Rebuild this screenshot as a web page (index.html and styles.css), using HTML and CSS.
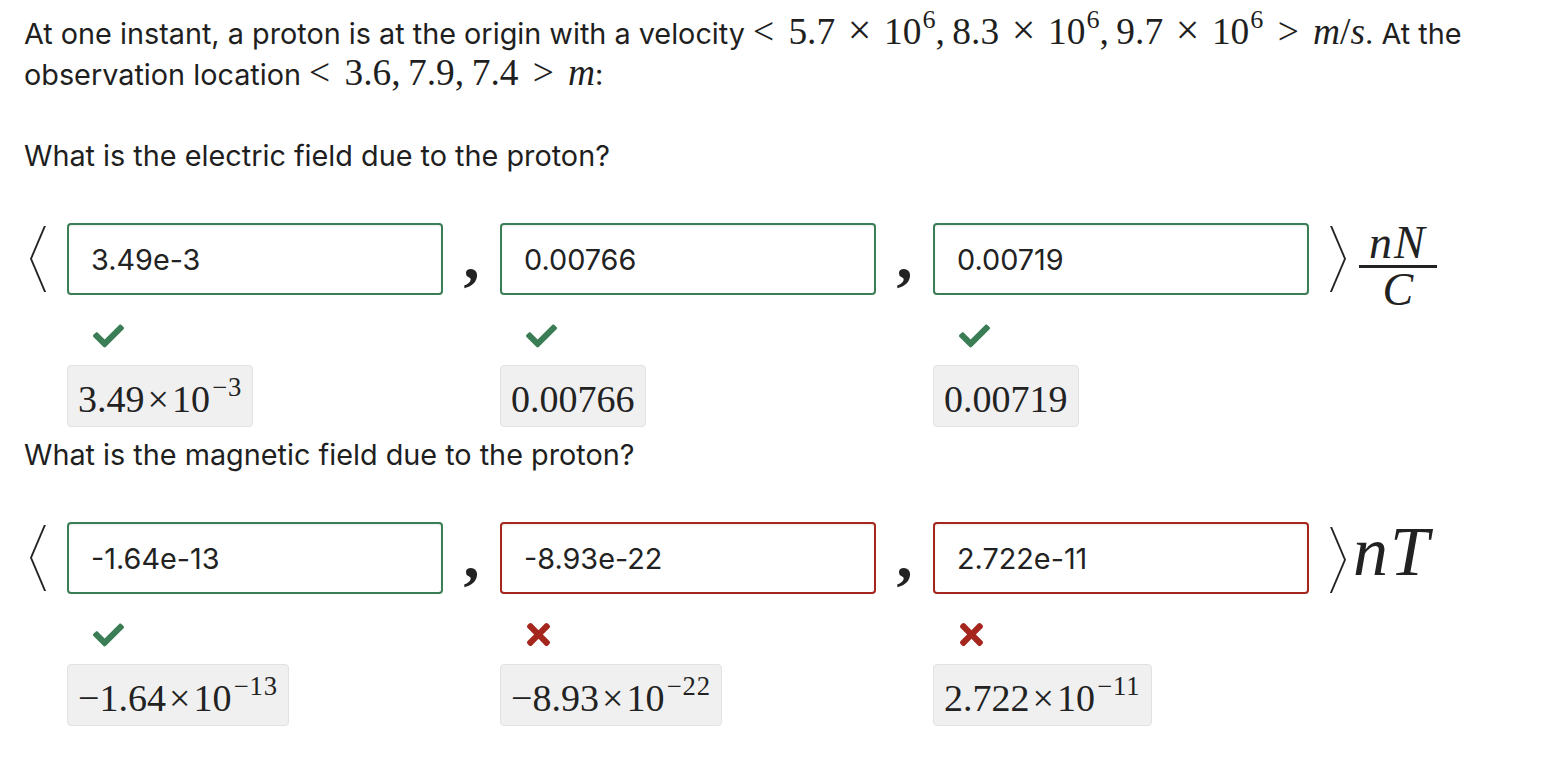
FILE: index.html
```html
<!DOCTYPE html>
<html lang="en">
<head>
  <meta charset="UTF-8">
  <meta name="viewport" content="width=device-width, initial-scale=1.0">
  <title>Proton Fields</title>
  <link rel="stylesheet" href="styles.css">
</head>
<body>
  <div class="problem">
    <p class="intro">
      At one instant, a proton is at the origin with a velocity
      <span class="math"><span class="rel">&lt;</span>5.7<span class="bin">×</span>10<sup>6</sup><span class="punct">,</span>8.3<span class="bin">×</span>10<sup>6</sup><span class="punct">,</span>9.7<span class="bin">×</span>10<sup>6</sup><span class="rel">&gt;</span><i>m</i>/<i>s</i></span>. At the
      observation location
      <span class="math"><span class="rel">&lt;</span>3.6<span class="punct">,</span>7.9<span class="punct">,</span>7.4<span class="rel">&gt;</span><i>m</i></span>:
    </p>

    <!-- electric field -->
    <p class="prompt">What is the electric field due to the proton?</p>
    <div class="answer-row">
      <span class="delim open"><span></span><span></span></span>
      <div class="cell">
        <input class="field good" type="text" value="3.49e-3">
        <span class="mark good">
          <svg viewBox="0 60 512 392" width="31" height="24"><path d="M173.898 439.404l-166.4-166.4c-9.997-9.997-9.997-26.206 0-36.204l36.203-36.204c9.997-9.998 26.207-9.998 36.204 0L192 312.69 432.095 72.596c9.997-9.997 26.207-9.997 36.204 0l36.203 36.204c9.997 9.997 9.997 26.206 0 36.204l-294.4 294.401c-9.998 9.997-26.207 9.997-36.204-.001z"/></svg>
        </span>
        <div class="preview"><span class="math">3.49<span class="bin">×</span>10<sup>−3</sup></span></div>
      </div>
      <span class="sep">,</span>
      <div class="cell">
        <input class="field good" type="text" value="0.00766">
        <span class="mark good">
          <svg viewBox="0 60 512 392" width="31" height="24"><path d="M173.898 439.404l-166.4-166.4c-9.997-9.997-9.997-26.206 0-36.204l36.203-36.204c9.997-9.998 26.207-9.998 36.204 0L192 312.69 432.095 72.596c9.997-9.997 26.207-9.997 36.204 0l36.203 36.204c9.997 9.997 9.997 26.206 0 36.204l-294.4 294.401c-9.998 9.997-26.207 9.997-36.204-.001z"/></svg>
        </span>
        <div class="preview"><span class="math">0.00766</span></div>
      </div>
      <span class="sep">,</span>
      <div class="cell">
        <input class="field good" type="text" value="0.00719">
        <span class="mark good">
          <svg viewBox="0 60 512 392" width="31" height="24"><path d="M173.898 439.404l-166.4-166.4c-9.997-9.997-9.997-26.206 0-36.204l36.203-36.204c9.997-9.998 26.207-9.998 36.204 0L192 312.69 432.095 72.596c9.997-9.997 26.207-9.997 36.204 0l36.203 36.204c9.997 9.997 9.997 26.206 0 36.204l-294.4 294.401c-9.998 9.997-26.207 9.997-36.204-.001z"/></svg>
        </span>
        <div class="preview"><span class="math">0.00719</span></div>
      </div>
      <span class="delim close"><span></span><span></span></span>
      <span class="unit frac">
        <span class="num"><i>nN</i></span>
        <span class="den"><i>C</i></span>
      </span>
    </div>

    <!-- magnetic field -->
    <p class="prompt second">What is the magnetic field due to the proton?</p>
    <div class="answer-row">
      <span class="delim open"><span></span><span></span></span>
      <div class="cell">
        <input class="field good" type="text" value="-1.64e-13">
        <span class="mark good">
          <svg viewBox="0 60 512 392" width="31" height="24"><path d="M173.898 439.404l-166.4-166.4c-9.997-9.997-9.997-26.206 0-36.204l36.203-36.204c9.997-9.998 26.207-9.998 36.204 0L192 312.69 432.095 72.596c9.997-9.997 26.207-9.997 36.204 0l36.203 36.204c9.997 9.997 9.997 26.206 0 36.204l-294.4 294.401c-9.998 9.997-26.207 9.997-36.204-.001z"/></svg>
        </span>
        <div class="preview"><span class="math">−1.64<span class="bin">×</span>10<sup>−13</sup></span></div>
      </div>
      <span class="sep">,</span>
      <div class="cell">
        <input class="field bad" type="text" value="-8.93e-22">
        <span class="mark bad">
          <svg viewBox="0 80 352 352" width="23" height="23"><path d="M242.72 256l100.07-100.07c12.28-12.28 12.28-32.19 0-44.48l-22.24-22.24c-12.28-12.28-32.19-12.28-44.48 0L176 189.28 75.93 89.21c-12.28-12.28-32.19-12.28-44.48 0L9.21 111.45c-12.28 12.28-12.28 32.19 0 44.48L109.28 256 9.21 356.07c-12.28 12.28-12.28 32.19 0 44.48l22.24 22.24c12.28 12.28 32.2 12.28 44.48 0L176 322.72l100.07 100.07c12.28 12.28 32.2 12.28 44.48 0l22.24-22.24c12.28-12.28 12.28-32.19 0-44.48L242.72 256z"/></svg>
        </span>
        <div class="preview"><span class="math">−8.93<span class="bin">×</span>10<sup>−22</sup></span></div>
      </div>
      <span class="sep">,</span>
      <div class="cell">
        <input class="field bad" type="text" value="2.722e-11">
        <span class="mark bad">
          <svg viewBox="0 80 352 352" width="23" height="23"><path d="M242.72 256l100.07-100.07c12.28-12.28 12.28-32.19 0-44.48l-22.24-22.24c-12.28-12.28-32.19-12.28-44.48 0L176 189.28 75.93 89.21c-12.28-12.28-32.19-12.28-44.48 0L9.21 111.45c-12.28 12.28-12.28 32.19 0 44.48L109.28 256 9.21 356.07c-12.28 12.28-12.28 32.19 0 44.48l22.24 22.24c12.28 12.28 32.2 12.28 44.48 0L176 322.72l100.07 100.07c12.28 12.28 32.2 12.28 44.48 0l22.24-22.24c12.28-12.28 12.28-32.19 0-44.48L242.72 256z"/></svg>
        </span>
        <div class="preview"><span class="math">2.722<span class="bin">×</span>10<sup>−11</sup></span></div>
      </div>
      <span class="delim close tight"><span></span><span></span></span>
      <span class="unit big"><i>nT</i></span>
    </div>
  </div>
</body>
</html>
```

FILE: styles.css
```css
/* General Reset */
body {
  font-family: Inter, "Noto Sans", sans-serif;
  margin: 0;
  padding: 0;
  background-color: #ffffff;
  color: #1f1f1f;
}

.problem {
  padding: 13px 24px 0;
  font-size: 28.8px;
  line-height: 40px;
}

p {
  margin: 0;
}

.intro {
  margin-bottom: 41px;
}

/* KaTeX-like math */
.math {
  font-family: "Liberation Serif", "DejaVu Serif", serif;
  font-size: 1.3em;
  line-height: 1;
  white-space: nowrap;
}

.math i {
  font-style: italic;
}

.math sup {
  font-size: 0.7em;
  line-height: 0;
  vertical-align: 0;
  position: relative;
  top: -0.62em;
  margin-left: 1px;
}

.rel {
  margin: 0 0.38em;
}

.rel:first-child {
  margin-left: 0;
}

.bin {
  margin: 0 0.3em;
  font-size: 1.12em;
  line-height: 0;
}

.punct {
  margin-right: 0.2em;
}

/* answer rows */
.answer-row {
  display: flex;
  align-items: flex-start;
  margin-top: 47px;
}

.prompt.second {
  margin-top: 8px;
}

.cell {
  width: 376px;
  display: flex;
  flex-direction: column;
  align-items: flex-start;
}

.field {
  width: 100%;
  height: 72px;
  box-sizing: border-box;
  padding: 0 22px;
  border: 2px solid #3b7d55;
  border-radius: 4px;
  font-family: Inter, "Noto Sans", sans-serif;
  font-size: 28.8px;
  color: #222222;
  background: #ffffff;
  box-shadow: inset 0 1px 2px rgba(0, 0, 0, 0.08);
  outline: none;
}

.field.bad {
  border-color: #a4261d;
}

.mark {
  display: block;
  height: 24px;
  margin: 29px 0 0 26px;
}

.mark svg {
  display: block;
}

.mark.good svg {
  fill: #3b7d55;
}

.mark.bad svg {
  fill: #a4261d;
  margin-left: 1px;
}

.preview {
  margin-top: 17px;
  height: 62px;
  box-sizing: border-box;
  padding: 0 10px;
  display: flex;
  align-items: center;
  background: #f0f0f0;
  border: 1px solid #e2e2e2;
  border-radius: 4px;
}

.preview .math {
  font-size: 38px;
  color: #222222;
  padding-top: 6px;
}

.preview .bin {
  margin: 0 0.08em;
  font-size: 1em;
}

.preview sup {
  margin-left: 2px;
  letter-spacing: 1px;
}

.sep {
  width: 57px;
  text-align: center;
  font-family: "Liberation Serif", "DejaVu Serif", serif;
  font-weight: bold;
  font-size: 64px;
  line-height: 64px;
  padding-top: 2px;
  color: #222222;
}

/* tall angle brackets */
.delim {
  display: flex;
  flex-direction: column;
  width: 15px;
  height: 65px;
  margin-top: 3px;
}

.delim span {
  display: block;
  width: 0;
  height: 32.5px;
  margin-left: 7px;
  border-left: 2px solid #222222;
}

.delim.open {
  margin: 3px 22px 0 6px;
}

.delim.open span:first-child,
.delim.close span:last-child {
  transform: skewX(-23deg);
}

.delim.open span:last-child,
.delim.close span:first-child {
  transform: skewX(23deg);
}

.delim.close {
  margin: 3px 14px 0 21px;
}

.delim.close.tight {
  margin: 5px 8px 0 21px;
}

/* units */
.unit {
  font-family: "Liberation Serif", "DejaVu Serif", serif;
  color: #222222;
}

.frac {
  display: inline-flex;
  flex-direction: column;
  align-items: center;
  font-size: 46px;
  line-height: 40px;
}

.frac .num {
  padding: 0 10px 2px;
  letter-spacing: 2px;
  border-bottom: 3px solid #222222;
}

.frac .den {
  padding-top: 2px;
}

.unit.big {
  font-size: 70px;
  line-height: 59px;
  letter-spacing: 2px;
}
```
